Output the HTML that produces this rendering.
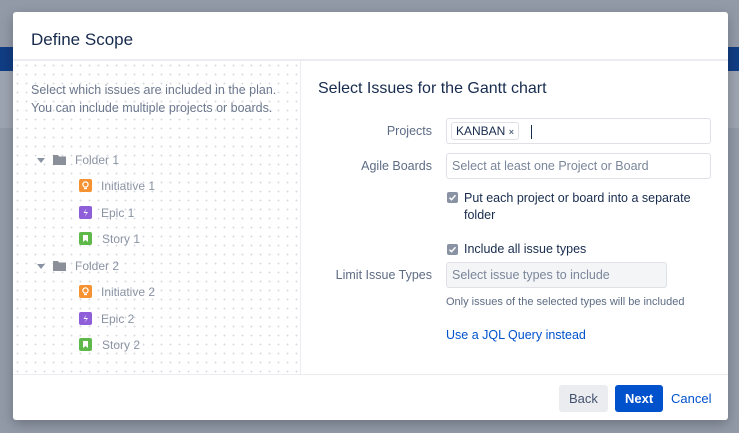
<!DOCTYPE html>
<html><head><meta charset="utf-8"><style>
*{box-sizing:border-box;margin:0;padding:0}
body{width:739px;height:433px;overflow:hidden;background:#929aa8;font-family:"Liberation Sans",sans-serif;position:relative}
.bar{position:absolute;left:0;right:0;top:47px;height:24px;background:#113d84}
.strip{position:absolute;left:0;right:0;top:71px;height:57px;background:#9ea5b2}
.modal{position:absolute;left:13px;top:12px;width:715px;height:408px;background:#fff;border-radius:3px;box-shadow:0 4px 12px rgba(0,0,0,.25);overflow:hidden}
.hd{height:49px;border-bottom:2px solid #ebecf0;padding:18px 0 0 18px;font-size:17px;color:#172b4d}
.left{position:absolute;left:0;top:49px;width:288px;height:313px;border-right:1px solid #ebecf0;background-color:#fff;background-image:radial-gradient(#d8dbe0 0.8px,transparent 1px);background-size:9px 9px}
.desc{position:absolute;left:18px;top:20px;font-size:12.5px;line-height:18px;color:#6b778c}
.tree div{position:absolute;font-size:12px;color:#8a93a3;white-space:nowrap}
.ic{position:absolute;width:13px;height:13px}
.right{position:absolute;left:289px;top:49px;right:0;height:313px}
.t{position:absolute;font-size:16px;color:#172b4d;left:16px;top:19px}
.lbl{position:absolute;font-size:12.5px;color:#5e6c84;text-align:right;width:130px;left:0}
.inp{position:absolute;left:144px;height:26px;border:1px solid #dfe1e6;border-radius:3px;font-size:12.5px;color:#7a869a;padding:5px 5px}
.cb{position:absolute;left:145px}
.ct{position:absolute;left:162px;font-size:12.5px;color:#172b4d;line-height:17px}
.ft{position:absolute;left:0;right:0;top:362px;border-top:1px solid #ebecf0;height:46px}
.btn{position:absolute;top:10px;height:27px;border-radius:3px;font-size:13px;padding:6px 10px}
</style></head><body>
<div class="bar"></div><div class="strip"></div>
<div class="modal">
<div class="hd">Define Scope</div>
<div class="left">
<div class="desc">Select which issues are included in the plan.<br>You can include multiple projects or boards.</div>
<div class="tree">
<svg style="position:absolute;left:24px;top:97px" width="8" height="5"><path d="M0 0h8L4 5z" fill="#8a93a3"/></svg>
<svg style="position:absolute;left:40px;top:93px" width="13" height="11"><path d="M0 1h5l1 1.5h7V11H0z" fill="#8a8f99"/></svg>
<div style="left:62px;top:92px">Folder 1</div>
<svg class="ic" style="left:66px;top:118px"><rect width="13" height="13" rx="2" fill="#f79232"/><circle cx="6.5" cy="5.5" r="2.6" fill="none" stroke="#fff" stroke-width="1.3"/><path d="M5 9.5h3" stroke="#fff" stroke-width="1.3"/></svg>
<div style="left:88px;top:118px">Initiative 1</div>
<svg class="ic" style="left:66px;top:145px"><rect width="13" height="13" rx="2" fill="#8f5fd9"/><path d="M7.5 2.5L4.5 7h3l-2 4 3.5-5h-3z" fill="#fff"/></svg>
<div style="left:88px;top:145px">Epic 1</div>
<svg class="ic" style="left:66px;top:171px"><rect width="13" height="13" rx="2" fill="#5fb84a"/><path d="M4 3h5v7L6.5 8 4 10z" fill="#fff"/></svg>
<div style="left:89px;top:171px">Story 1</div>
<svg style="position:absolute;left:24px;top:203px" width="8" height="5"><path d="M0 0h8L4 5z" fill="#8a93a3"/></svg>
<svg style="position:absolute;left:40px;top:199px" width="13" height="11"><path d="M0 1h5l1 1.5h7V11H0z" fill="#8a8f99"/></svg>
<div style="left:62px;top:198px">Folder 2</div>
<svg class="ic" style="left:66px;top:224px"><rect width="13" height="13" rx="2" fill="#f79232"/><circle cx="6.5" cy="5.5" r="2.6" fill="none" stroke="#fff" stroke-width="1.3"/><path d="M5 9.5h3" stroke="#fff" stroke-width="1.3"/></svg>
<div style="left:88px;top:224px">Initiative 2</div>
<svg class="ic" style="left:66px;top:251px"><rect width="13" height="13" rx="2" fill="#8f5fd9"/><path d="M7.5 2.5L4.5 7h3l-2 4 3.5-5h-3z" fill="#fff"/></svg>
<div style="left:88px;top:251px">Epic 2</div>
<svg class="ic" style="left:66px;top:277px"><rect width="13" height="13" rx="2" fill="#5fb84a"/><path d="M4 3h5v7L6.5 8 4 10z" fill="#fff"/></svg>
<div style="left:89px;top:277px">Story 2</div>
</div></div>
<div class="right">
<div class="t">Select Issues for the Gantt chart</div>
<div class="lbl" style="top:63px">Projects</div>
<div class="inp" style="top:57px;width:265px;padding:3px 4px;color:#172b4d"><span style="display:inline-block;border:1px solid #dfe1e6;border-radius:3px;padding:1px 4px;font-size:12px">KANBAN <span style="font-size:9px;color:#5e6c84;font-weight:bold">&#215;</span></span><span style="display:inline-block;width:1px;height:14px;background:#172b4d;margin-left:12px;vertical-align:middle"></span></div>
<div class="lbl" style="top:98px">Agile Boards</div>
<div class="inp" style="top:92px;width:265px">Select at least one Project or Board</div>
<svg class="cb" style="top:131px" width="11" height="11"><rect width="11" height="11" rx="2" fill="#8993a4"/><path d="M2.5 5.7l2 2 4-4.5" stroke="#fff" stroke-width="1.5" fill="none"/></svg>
<div class="ct" style="top:129px">Put each project or board into a separate<br>folder</div>
<svg class="cb" style="top:183px" width="11" height="11"><rect width="11" height="11" rx="2" fill="#8993a4"/><path d="M2.5 5.7l2 2 4-4.5" stroke="#fff" stroke-width="1.5" fill="none"/></svg>
<div class="ct" style="top:180px">Include all issue types</div>
<div class="lbl" style="top:207px">Limit Issue Types</div>
<div class="inp" style="top:201px;width:221px;background:#f4f5f7">Select issue types to include</div>
<div style="position:absolute;left:144px;top:235px;font-size:11px;color:#5e6c84">Only issues of the selected types will be included</div>
<div style="position:absolute;left:144px;top:267px;font-size:12.5px;color:#0052cc">Use a JQL Query instead</div>
</div>
<div class="ft">
<div class="btn" style="left:546px;background:#ebecf0;color:#42526e">Back</div>
<div class="btn" style="left:602px;background:#0052cc;color:#fff;font-weight:bold">Next</div>
<div class="btn" style="left:648px;color:#0052cc">Cancel</div>
</div>
</div>
</body></html>
